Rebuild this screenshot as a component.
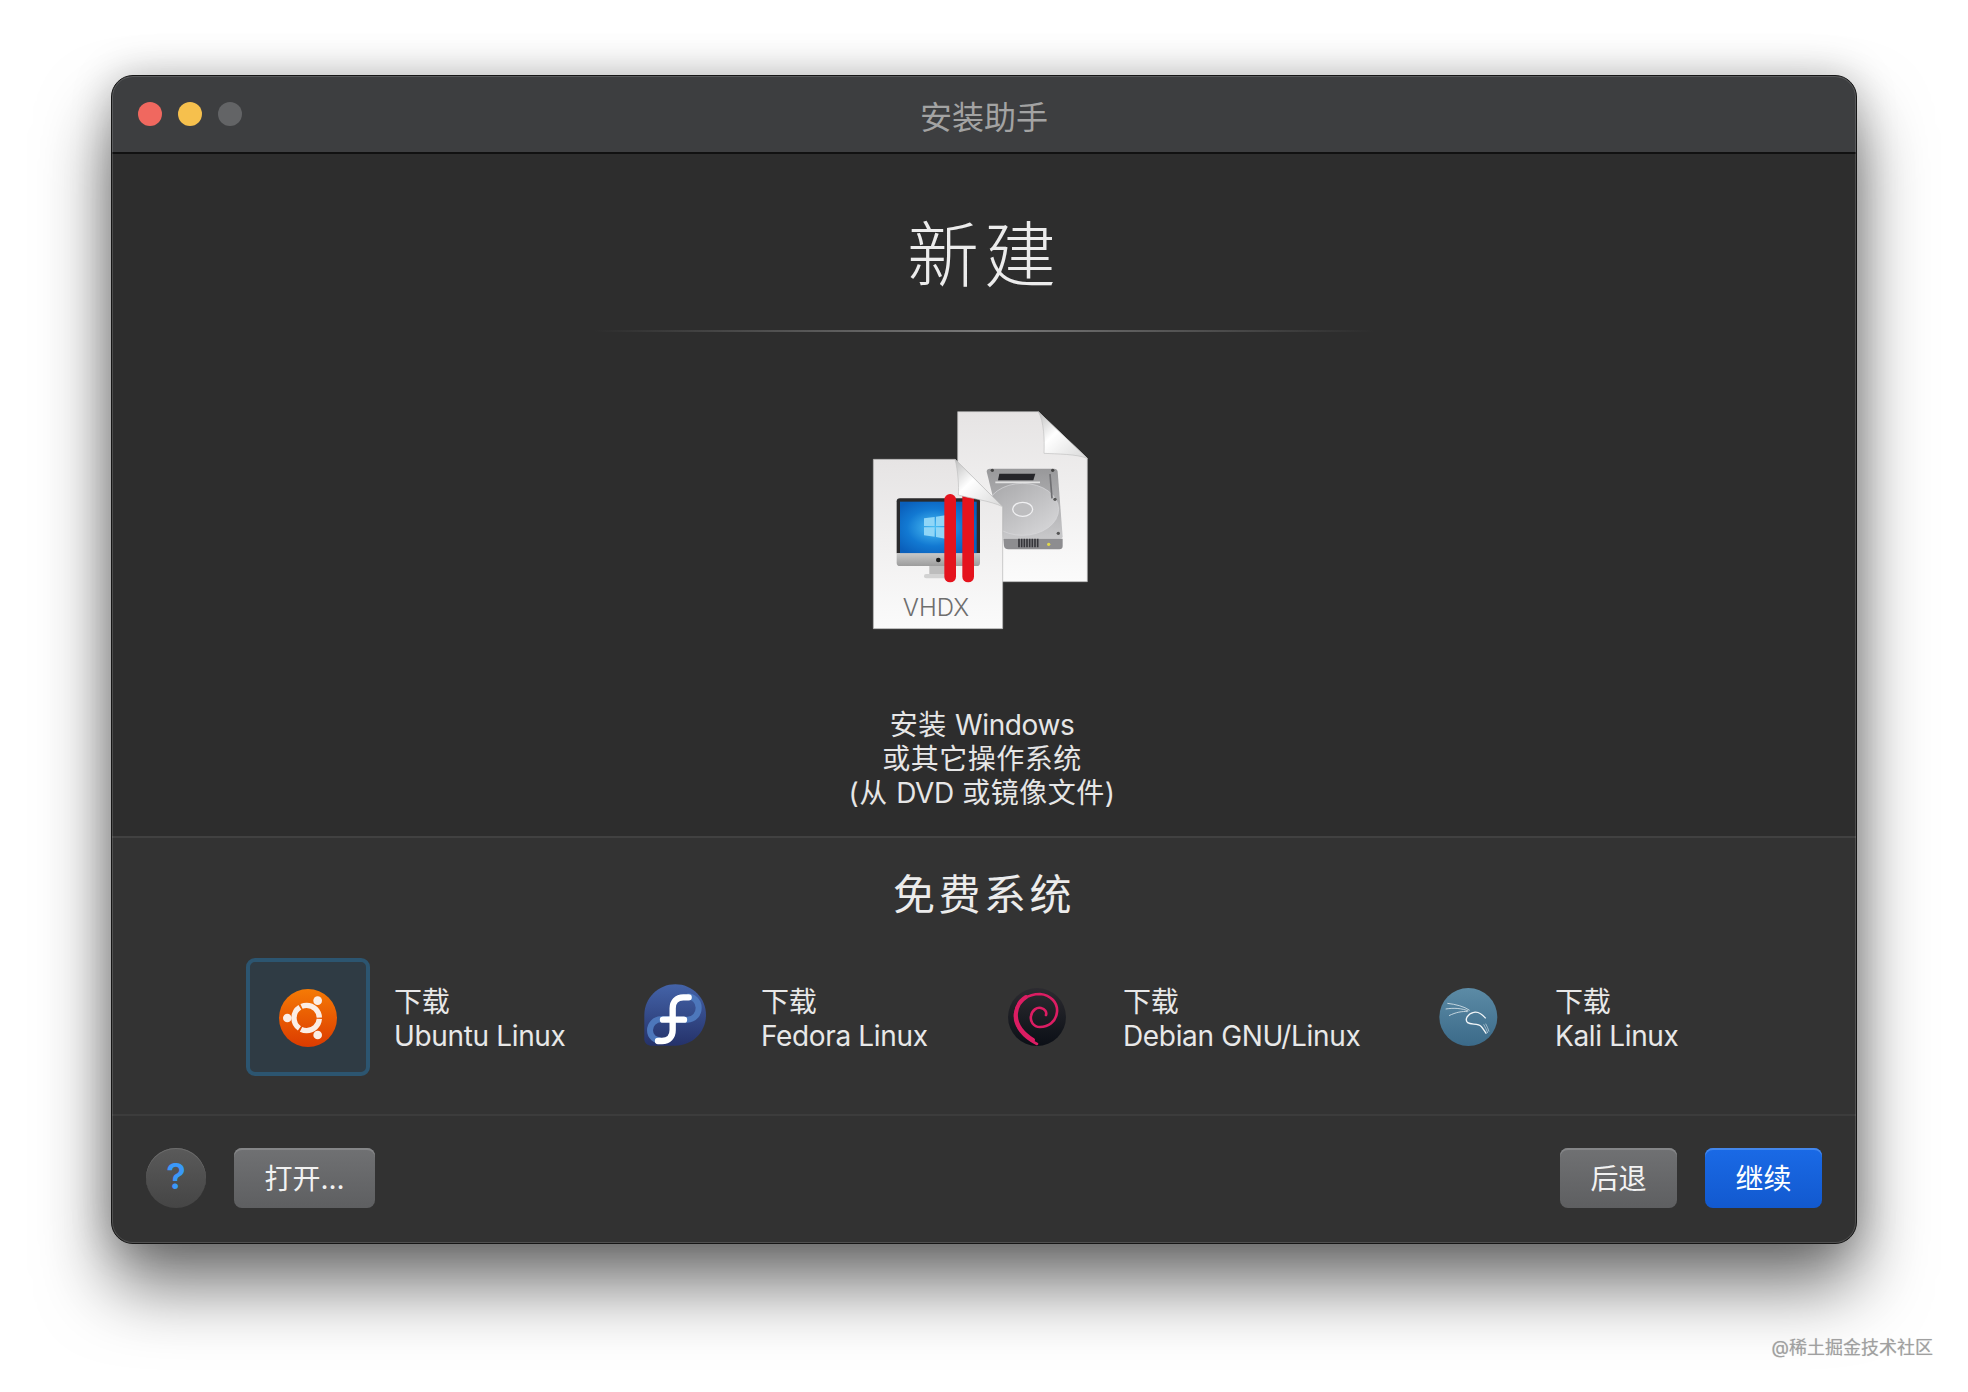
<div class="page">
  <div class="window">
    <header class="titlebar">
      <div class="lights">
        <span class="light red"></span>
        <span class="light yellow"></span>
        <span class="light gray"></span>
      </div>
      <span class="win-title">安装助手</span>
    </header>

    <section class="create">
      <h1>新建</h1>
      <div class="rule"></div>
      <svg class="docs" width="280" height="260" viewBox="0 0 840 780">
        <defs>
          <linearGradient id="paper" x1="0" y1="0" x2="0" y2="1">
            <stop offset="0" stop-color="#e6e4e4" />
            <stop offset="1" stop-color="#fbfbfb" />
          </linearGradient>
          <linearGradient id="fold" x1="0" y1="0" x2="1" y2="1">
            <stop offset="0" stop-color="#bdbdbd" />
            <stop offset="0.4" stop-color="#ffffff" />
            <stop offset="1" stop-color="#d8d8d8" />
          </linearGradient>
          <linearGradient id="disk" x1="0" y1="0" x2="0" y2="1">
            <stop offset="0" stop-color="#98989a" />
            <stop offset="1" stop-color="#c8c8ca" />
          </linearGradient>
          <linearGradient id="platter" x1="0" y1="0" x2="1" y2="1">
            <stop offset="0" stop-color="#a6a6a8" />
            <stop offset="1" stop-color="#dadadc" />
          </linearGradient>
          <radialGradient id="screen" cx="0.45" cy="0.5" r="0.6">
            <stop offset="0" stop-color="#4cc0f5" />
            <stop offset="0.6" stop-color="#1279d2" />
            <stop offset="1" stop-color="#0a5fbb" />
          </radialGradient>
          <linearGradient id="chin" x1="0" y1="0" x2="0" y2="1">
            <stop offset="0" stop-color="#c8c8c8" />
            <stop offset="1" stop-color="#9c9c9c" />
          </linearGradient>
        </defs>

        <!-- back page -->
        <path d="M353 65H595L742 205V575H353Z" fill="url(#paper)" stroke="#b4b4b4" stroke-width="2" />
        <path d="M595 65C612 95 614 150 612 190C650 192 710 192 742 205Z" fill="url(#fold)" stroke="#c0c0c0" stroke-width="2" />
        <path d="M440 245Q440 236 450 236H642Q652 236 653 245L668 440Q668 446 660 446H490Z" fill="url(#disk)" />
        <path d="M490 446H668V468Q668 478 658 478H505Q494 478 492 468Z" fill="#8d8d90" />
        <ellipse cx="548" cy="358" rx="108" ry="78" fill="url(#platter)" stroke="#dadadc" stroke-width="2" />
        <ellipse cx="548" cy="358" rx="30" ry="21" fill="#bdbdbf" stroke="#f0f0f2" stroke-width="4" />
        <path d="M478 251H586L580 271H474Z" fill="#26262a" />
        <path d="M466 277H600" stroke="#e2e2e2" stroke-width="5" />
        <path d="M630 252L636 325" stroke="#6f6f72" stroke-width="5" />
        <circle cx="457" cy="241" r="5" fill="#444" />
        <circle cx="638" cy="241" r="5" fill="#444" />
        <circle cx="645" cy="328" r="5" fill="#555" />
        <circle cx="655" cy="430" r="5" fill="#555" />
        <path d="M537 446V472M545 446V472M553 446V472M561 446V472M569 446V472M577 446V472M585 446V472M593 446V472" stroke="#35353a" stroke-width="5" />
        <circle cx="626" cy="463" r="5" fill="#e2d94a" />

        <!-- front page -->
        <path d="M100 208H345L488 350V716H100Z" fill="url(#paper)" stroke="#b4b4b4" stroke-width="2" />
        <path d="M170 334Q170 325 180 325H410Q420 325 420 334V490H170Z" fill="#2a2a2c" />
        <rect x="180" y="335" width="230" height="155" fill="url(#screen)" />
        <path d="M252 385L284 381V408H252ZM288 380L316 376V408H288ZM252 412H284V440L252 436ZM288 412H316V446L288 441Z" fill="#8fd6f7" />
        <path d="M170 490H420V518Q420 528 410 528H180Q170 528 170 518Z" fill="url(#chin)" />
        <circle cx="295" cy="510" r="7" fill="#1b1b1b" />
        <path d="M268 528H322L332 552H268Z" fill="#bdbdbd" />
        <rect x="252" y="552" width="80" height="13" rx="6" fill="#d2d2d2" />
        <rect x="367" y="300" width="35" height="277" rx="17" fill="#e5131d" />
        <path d="M345 208C354 240 357 290 355 315C390 325 450 332 488 350Z" fill="url(#fold)" stroke="#c0c0c0" stroke-width="2" />
        <rect x="313" y="312" width="35" height="265" rx="17" fill="#e5131d" />
        <text class="vhdx" x="288" y="678" text-anchor="middle">VHDX</text>
      </svg>
      <p class="desc">安装 <span class="latin">Windows</span><br />或其它操作系统<br />(从 <span class="latin">DVD</span> 或镜像文件)</p>
    </section>

    <section class="free">
      <h2>免费系统</h2>
      <div class="os-row">
        <div class="os">
          <div class="os-icon selected">
            <svg width="76" height="76" viewBox="0 -3 228 228">
              <defs>
                <linearGradient id="ubuntu" x1="0" y1="0" x2="0" y2="1">
                  <stop offset="0" stop-color="#f57a05" />
                  <stop offset="1" stop-color="#dc3b00" />
                </linearGradient>
              </defs>
              <circle cx="114" cy="114" r="87" fill="url(#ubuntu)" />
              <circle cx="110" cy="114" r="38" fill="none" stroke="#fbeee6" stroke-width="16" stroke-dasharray="74 5.6" stroke-dashoffset="-2.8" />
              <circle cx="143" cy="62" r="13" fill="#fbeee6" />
              <circle cx="52" cy="114" r="13" fill="#fbeee6" />
              <circle cx="143" cy="165" r="13" fill="#fbeee6" />
            </svg>
          </div>
          <div class="os-text">下载<br />Ubuntu Linux</div>
        </div>
        <div class="os">
          <div class="os-icon">
            <svg width="90" height="80" viewBox="0 6 270 240">
              <defs>
                <linearGradient id="fedora" x1="0" y1="0" x2="0" y2="1">
                  <stop offset="0" stop-color="#4463a8" />
                  <stop offset="1" stop-color="#25326a" />
                </linearGradient>
              </defs>
              <path d="M136 28C187 28 228 69 228 120C228 171 187 212 136 212H62C52 212 43 203 43 193V120C43 69 85 28 136 28Z" fill="url(#fedora)" />
              <path d="M134 132H96C72 132 60 150 60 166C60 186 76 196 92 196" fill="none" stroke="#4d77bb" stroke-width="18" />
              <path d="M140 134H172C194 134 206 116 206 98C206 78 190 64 172 64" fill="none" stroke="#4d77bb" stroke-width="18" />
              <path d="M176 67H160C140 67 128 80 128 100V165C128 185 116 198 96 198H84" fill="none" stroke="#fff" stroke-width="19" stroke-linecap="round" />
              <path d="M99 134H162" fill="none" stroke="#fff" stroke-width="19" stroke-linecap="round" />
            </svg>
          </div>
          <div class="os-text">下载<br />Fedora Linux</div>
        </div>
        <div class="os">
          <div class="os-icon">
            <svg width="58" height="58" viewBox="0 0 58 58">
              <defs>
                <linearGradient id="debian" x1="0" y1="0" x2="0" y2="1">
                  <stop offset="0" stop-color="#2c2b30" />
                  <stop offset="1" stop-color="#0b0f16" />
                </linearGradient>
              </defs>
              <circle cx="29" cy="29" r="29" fill="url(#debian)" />
              <path d="M29 56C15 49 6 38 7 26C9 12 21 6 32 6C43 7 50 15 49 24C48 34 40 39 32 39C25 39 22 33 23 28C24 22 29 19 33 20C37 21 39 24 38 27" fill="none" stroke="#dc1d63" stroke-width="2.6" stroke-linecap="round" />
              <path d="M25 52C14 45 7 36 8 25C9 17 13 12 18 9" fill="none" stroke="#dc1d63" stroke-width="4" stroke-linecap="round" />
            </svg>
          </div>
          <div class="os-text">下载<br />Debian GNU/Linux</div>
        </div>
        <div class="os">
          <div class="os-icon">
            <svg width="80" height="76" viewBox="0 0 240 228">
              <defs>
                <linearGradient id="kali" x1="0" y1="0" x2="0" y2="1">
                  <stop offset="0" stop-color="#5c8ba6" />
                  <stop offset="1" stop-color="#3b6a89" />
                </linearGradient>
              </defs>
              <circle cx="118" cy="114" r="87" fill="url(#kali)" />
              <path d="M55 73C80 76 105 82 122 94M50 90C75 86 100 88 118 96M60 110C80 100 100 96 116 98" fill="none" stroke="#dbe6ec" stroke-width="2.5" />
              <path d="M170 118C160 106 148 96 134 100C116 104 106 122 116 131C126 138 148 132 156 142C162 148 166 156 172 164" fill="none" stroke="#f2f6f8" stroke-width="4" />
              <path d="M164 136C168 144 174 154 176 162M170 134C174 142 178 150 180 158" fill="none" stroke="#cfdde5" stroke-width="2" />
            </svg>
          </div>
          <div class="os-text">下载<br />Kali Linux</div>
        </div>
      </div>
    </section>

    <footer class="actions">
      <button class="help">?</button>
      <button class="btn open">打开...</button>
      <div class="spacer"></div>
      <button class="btn back">后退</button>
      <button class="btn next">继续</button>
    </footer>
  </div>
  <span class="watermark">@稀土掘金技术社区</span>
</div>

<style>
  :global(body) {
    margin: 0;
    background: #fff;
  }

  .page {
    position: relative;
    width: 1968px;
    height: 1392px;
    overflow: hidden;
    padding: 75px 0 0 111px;
    box-sizing: border-box;
    font-family: Inter, "Noto Sans CJK SC", sans-serif;
    color: #e8e8e8;
  }

  .window {
    position: relative;
    width: 1746px;
    height: 1169px;
    box-sizing: border-box;
    display: flex;
    flex-direction: column;
    border: 1px solid #161616;
    border-radius: 22px;
    overflow: hidden;
    background: #323232;
    box-shadow: 0 42px 70px rgba(0, 0, 0, 0.55), 0 0 40px rgba(0, 0, 0, 0.22);
  }

  /* light rim along the window edge */
  .window::after {
    content: "";
    position: absolute;
    inset: 0;
    border-radius: 21px;
    box-shadow: inset 0 0 0 1px rgba(255, 255, 255, 0.15);
    pointer-events: none;
  }

  .titlebar {
    position: relative;
    height: 78px;
    flex: none;
    display: flex;
    align-items: center;
    justify-content: center;
    box-sizing: border-box;
    background: #3d3e40;
    border-bottom: 2px solid #111;
  }

  .lights {
    position: absolute;
    left: 26px;
    top: 26px;
    display: flex;
    gap: 16px;
  }

  .light {
    width: 24px;
    height: 24px;
    border-radius: 50%;
  }

  .red { background: #f0685f; }
  .yellow { background: #f6c04d; }
  .gray { background: #636466; }

  .win-title {
    font-size: 32px;
    line-height: 40px;
    color: #a3a3a3;
    margin-top: 7px;
  }

  .create {
    height: 682px;
    flex: none;
    box-sizing: border-box;
    padding-top: 56px;
    display: flex;
    flex-direction: column;
    align-items: center;
    background: #2d2d2d;
  }

  h1 {
    margin: 0;
    font-size: 72px;
    line-height: 90px;
    font-weight: 300;
    letter-spacing: 5px;
    color: #ececec;
  }

  .rule {
    width: 780px;
    height: 2px;
    margin-top: 30px;
    background: linear-gradient(90deg, transparent, #7a7a7a 50%, transparent);
  }

  .docs {
    display: block;
    margin: 58px 8px 0 0;
    flex: none;
  }

  .vhdx {
    font-size: 72px;
    font-weight: 300;
    fill: #6e6e6e;
  }

  .desc {
    margin: 58px 0 0;
    padding-right: 4px;
    font-size: 28px;
    line-height: 34px;
    letter-spacing: 0.5px;
    text-align: center;
    color: #e6e6e6;
  }

  .latin {
    letter-spacing: -0.4px;
  }

  .free {
    flex: none;
    height: 280px;
    box-sizing: border-box;
    padding-top: 32px;
    background: #333;
    border-top: 2px solid #414141;
    border-bottom: 2px solid #3c3c3c;
  }

  h2 {
    margin: 0;
    font-size: 42px;
    line-height: 50px;
    font-weight: 400;
    letter-spacing: 3.5px;
    text-align: center;
    color: #ececec;
  }

  .os-row {
    display: grid;
    grid-template-columns: 367px 362px 432px auto;
    margin: 38px 0 0 134px;
  }

  .os {
    display: flex;
    align-items: center;
    gap: 24px;
  }

  .os-icon {
    width: 124px;
    height: 118px;
    flex: none;
    box-sizing: border-box;
    display: flex;
    align-items: center;
    justify-content: center;
    border-radius: 9px;
  }

  .os-icon.selected {
    background: #2f3b44;
    border: 4px solid #2c5570;
  }

  .os-icon svg {
    display: block;
    flex: none;
  }

  .os-text {
    margin-top: 4px;
    font-size: 28px;
    line-height: 34px;
    letter-spacing: -0.35px;
    color: #e8e8e8;
    white-space: nowrap;
  }

  .actions {
    flex: 1;
    display: flex;
    align-items: flex-start;
    gap: 28px;
    padding: 32px 34px 0 34px;
    background: #323232;
  }

  .spacer {
    flex: 1;
  }

  button {
    font-family: inherit;
    padding: 0 0 3px;
    border: none;
    cursor: pointer;
  }

  .help {
    width: 60px;
    height: 60px;
    border-radius: 50%;
    background: linear-gradient(#5a5a5a, #454545);
    box-shadow: inset 0 1px 0 #6c6c6c;
    color: #3a98f8;
    font-size: 36px;
    font-weight: 600;
    line-height: 57px;
  }

  .btn {
    height: 60px;
    width: 117px;
    border-radius: 8px;
    font-size: 28px;
    color: #f2f2f2;
    background: linear-gradient(#707173, #5e5f61);
    box-shadow: inset 0 2px 0 #858688;
  }

  .open {
    width: 141px;
  }

  .next {
    background: linear-gradient(#1a6ae6, #1259cf);
    box-shadow: inset 0 2px 0 #4487ec;
    color: #fff;
  }

  .watermark {
    position: absolute;
    right: 35px;
    top: 1335px;
    font-size: 18px;
    line-height: 26px;
    color: #a0a0a0;
    text-shadow: 0 0 1px #ccc;
  }
</style>
